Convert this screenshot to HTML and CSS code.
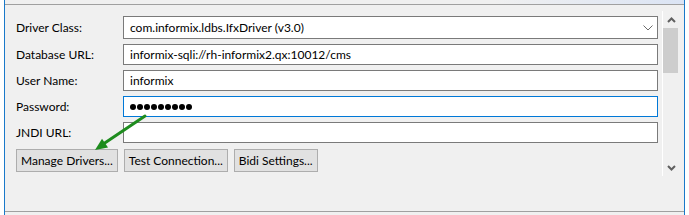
FILE: index.html
```html
<!DOCTYPE html>
<html>
<head>
<meta charset="utf-8">
<link rel="stylesheet" href="styles.css">
</head>
<body>
<div class="window">
  <div class="strip"></div>
  <div class="panel">
    <div class="form">
      <div class="grid">
        <div class="label">Driver Class:</div>
        <div class="field select"><span>com.informix.ldbs.IfxDriver (v3.0)</span>
          <svg class="caret" width="10" height="6" viewBox="0 0 10 6"><path d="M0.5 0.5 L5 5 L9.5 0.5" fill="none" stroke="#6b6b6b" stroke-width="1"/></svg>
        </div>
        <div class="label">Database URL:</div>
        <div class="field">informix-sqli://rh-informix2.qx:10012/cms</div>
        <div class="label">User Name:</div>
        <div class="field">informix</div>
        <div class="label">Password:</div>
        <div class="field focused"><span class="dots"><i></i><i></i><i></i><i></i><i></i><i></i><i></i><i></i><i></i></span></div>
        <div class="label">JNDI URL:</div>
        <div class="field"></div>
      </div>
      <div class="buttons">
        <div class="btn">Manage Drivers...</div>
        <div class="btn">Test Connection...</div>
        <div class="btn">Bidi Settings...</div>
      </div>
    </div>
    <div class="scrollbar">
      <div class="sb-btn"><svg width="9" height="6" viewBox="0 0 9 6"><path d="M1 5 L4.5 1.5 L8 5" fill="none" stroke="#606060" stroke-width="2"/></svg></div>
      <div class="thumb"></div>
      <div class="track"></div>
      <div class="sb-btn"><svg width="9" height="6" viewBox="0 0 9 6"><path d="M1 1 L4.5 4.5 L8 1" fill="none" stroke="#606060" stroke-width="2"/></svg></div>
    </div>
  </div>
</div>
<svg class="arrow" width="689" height="215" viewBox="0 0 689 215">
  <line x1="145" y1="116" x2="104" y2="143.5" stroke="#1e8c1e" stroke-width="3" stroke-linecap="round"/>
  <polygon points="95,150 108,147.6 102,138.8" fill="#1e8c1e"/>
</svg>
</body>
</html>
```

FILE: styles.css
```css
html, body {
  margin: 0;
  padding: 0;
  background: #ffffff;
}
body {
  position: relative;
  width: 689px;
  height: 215px;
  overflow: hidden;
  font-family: Lato, "Noto Sans", sans-serif;
  font-size: 12px;
  color: #000;
}
.window {
  margin-left: 4px;
  width: 679px;
  height: 215px;
  border-left: 1px solid #1979ca;
  border-right: 1px solid #1979ca;
  background: #f0f0f0;
  display: flex;
  flex-direction: column;
}
.strip {
  height: 4px;
  background: linear-gradient(to right, #f0f0f0 72%, #dbe4f4);
}
.panel {
  height: 206px;
  border-top: 1px solid #a0a0a0;
  border-bottom: 1px solid #a0a0a0;
  display: flex;
  align-items: flex-start;
}
.form {
  width: 642px;
  margin-left: 11px;
  padding-top: 11px;
}
.grid {
  display: grid;
  grid-template-columns: 107px 535px;
  grid-template-rows: 23px 21px 21px 21px 21px;
  row-gap: 5px;
}
.label {
  align-self: center;
  line-height: 16px;
  white-space: nowrap;
}
.field {
  box-sizing: border-box;
  background: #fff;
  border: 1px solid #7a7a7a;
  padding: 0 6px;
  display: flex;
  align-items: center;
  line-height: 16px;
  white-space: nowrap;
}
.select {
  justify-content: space-between;
  padding-right: 4px;
}
.caret {
  display: block;
}
.focused {
  border-color: #0078d7;
}
.dots {
  display: flex;
  gap: 1px;
}
.dots i {
  display: block;
  width: 6px;
  height: 6px;
  border-radius: 50%;
  background: #000;
}
.buttons {
  display: flex;
  gap: 6px;
  margin-top: 6px;
}
.btn {
  box-sizing: border-box;
  height: 23px;
  border: 1px solid #adadad;
  background: #e1e1e1;
  display: flex;
  align-items: center;
  justify-content: center;
  padding: 0 4px;
  white-space: nowrap;
}
.scrollbar {
  margin-top: 6px;
  margin-left: 4px;
  width: 16px;
  height: 165px;
  border-left: 1px solid #ffffff;
  display: flex;
  flex-direction: column;
}
.sb-btn {
  height: 17px;
  display: flex;
  align-items: center;
  justify-content: center;
}
.thumb {
  width: 15px;
  height: 45px;
  background: #cdcdcd;
}
.track {
  flex: 1;
}
.arrow {
  position: absolute;
  left: 0;
  top: 0;
  pointer-events: none;
}
```
